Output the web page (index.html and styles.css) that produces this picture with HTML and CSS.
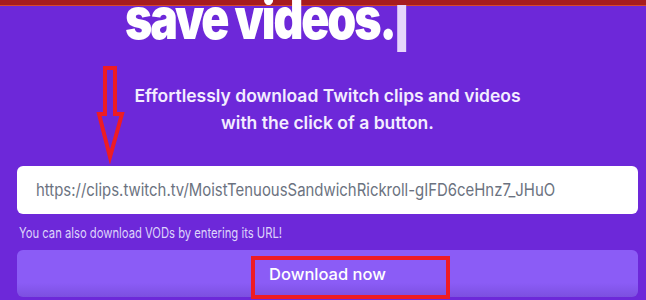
FILE: index.html
```html
<!DOCTYPE html>
<html lang="en">

<head>
    <meta charset="UTF-8">
    <meta name="viewport" content="width=device-width, initial-scale=1.0">
    <title>Twitch Clip Downloader</title>
    <link rel="stylesheet" href="styles.css">
</head>

<body>
    <div class="topbar"></div>

    <div class="hero">
        <h1 class="title"><span class="title-text">save videos.<span class="caret"></span></span></h1>
        <p class="lead">Effortlessly download Twitch clips and videos<br>with the click of a button.</p>

        <form class="form">
            <div class="url"><span class="url-text">https://clips.twitch.tv/MoistTenuousSandwichRickroll-gIFD6ceHnz7_JHuO</span></div>
            <p class="hint"><span class="hint-text">You can also download VODs by entering its URL!</span></p>
            <button class="btn" type="button">Download now</button>
        </form>

        <!-- annotations -->
        <svg class="arrow" width="40" height="105" viewBox="0 0 40 105">
            <path d="M15 9 H25 V55 H32 L20 98 L9 55 H15 Z" fill="none" stroke="#ee1c24" stroke-width="4" />
        </svg>
        <div class="box"></div>
    </div>
</body>

</html>
```

FILE: styles.css
```css
* {
    box-sizing: border-box;
}

body {
    margin: 0;
    height: 300px;
    overflow: hidden;
    background-color: #6d28d9;
    font-family: Inter, "Noto Sans", sans-serif;
}

.topbar {
    height: 6px;
    background-color: #a61c1f;
    border-bottom: 1px solid #d8472c;
}

.hero {
    position: relative;
    padding: 0 8px 0 17px;
}

.title {
    margin: -17px 0 0 0;
    padding-left: 108px;
    height: 60px;
    font-size: 57px;
    font-weight: 900;
    line-height: 60px;
    letter-spacing: -2.6px;
    color: #fff;
    white-space: nowrap;
}

.title-text {
    display: inline-block;
    transform: scaleX(0.815);
    transform-origin: left center;
}

.caret {
    display: inline-block;
    width: 11px;
    height: 47px;
    margin-left: 3px;
    vertical-align: -13px;
    background-color: #e6d5fb;
}

.lead {
    margin: 33px 0 0 0;
    text-align: center;
    font-size: 17.5px;
    font-weight: 600;
    line-height: 27px;
    color: #f3edff;
}

.form {
    margin: 30px 0 0 0;
}

.url {
    display: flex;
    align-items: center;
    height: 48px;
    padding: 0 19px;
    border-radius: 6px;
    background-color: #fff;
    font-size: 17px;
    color: #6b7280;
    white-space: nowrap;
    overflow: hidden;
}

.url-text {
    display: inline-block;
    transform: scaleX(0.878);
    transform-origin: left center;
}

.hint {
    margin: 10px 0 0 2px;
    font-size: 14.5px;
    color: #ddd3fb;
    white-space: nowrap;
}

.hint-text {
    display: inline-block;
    transform: scaleX(0.775);
    transform-origin: left center;
}

.btn {
    display: block;
    width: 100%;
    height: 47px;
    margin-top: 9px;
    border: none;
    border-radius: 6px;
    background: linear-gradient(#8b5cf6 70%, #7c4fe0);
    font-family: Inter, "Noto Sans", sans-serif;
    font-size: 16.5px;
    font-weight: 500;
    color: #fff;
}

.arrow {
    position: absolute;
    left: 90px;
    top: 70px;
}

.box {
    position: absolute;
    left: 251px;
    top: 267px;
    width: 199px;
    height: 43px;
    border: 4px solid #ee1c24;
}
```
